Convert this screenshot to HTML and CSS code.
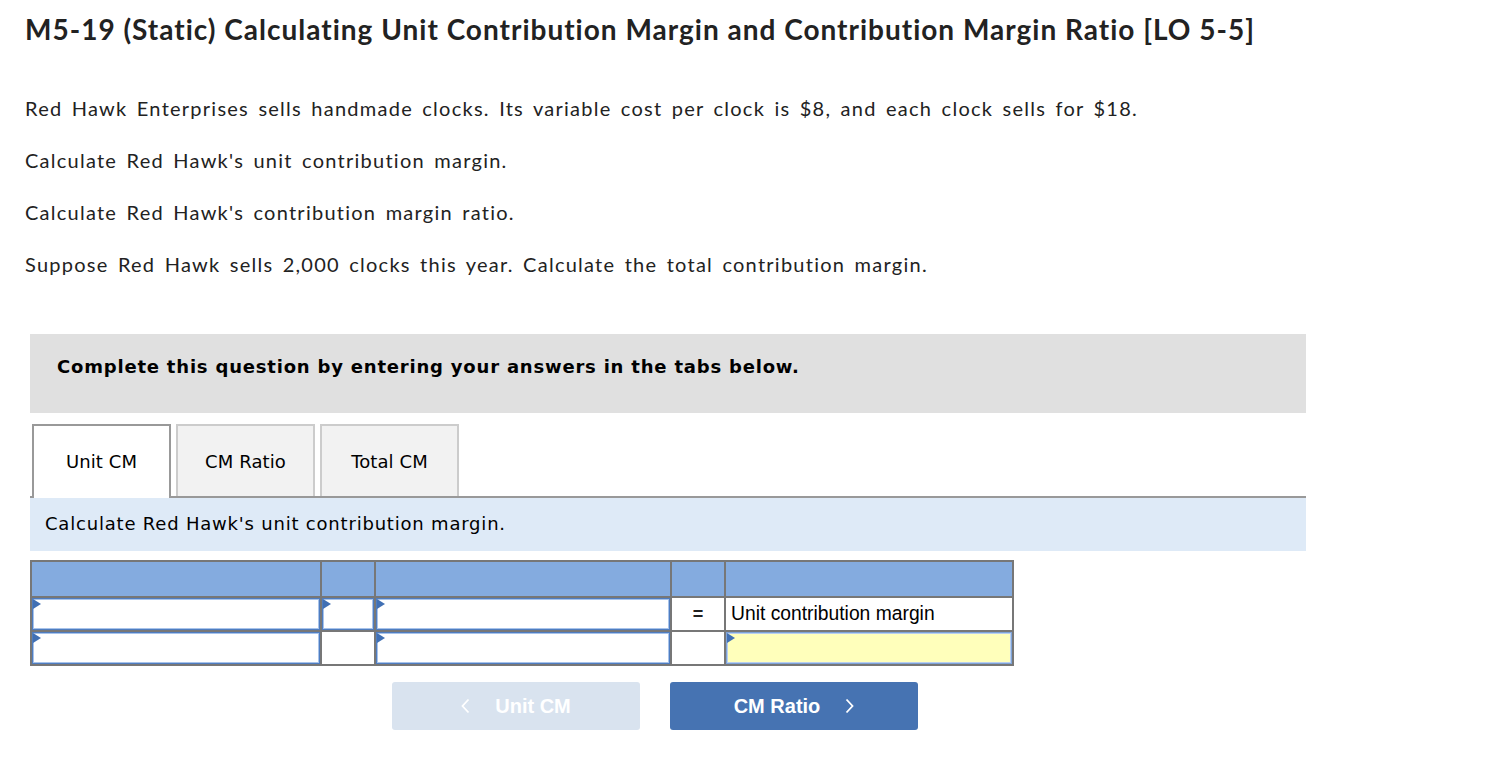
FILE: index.html
```html
<!DOCTYPE html>
<html lang="en">
<head>
<meta charset="utf-8">
<title>M5-19 (Static)</title>
<link rel="stylesheet" href="styles.css">
</head>
<body>
<div class="page">
  <h1 class="title">M5-19 (Static) Calculating Unit Contribution Margin and Contribution Margin Ratio [LO 5-5]</h1>
  <div class="question">
    <p>Red Hawk Enterprises sells handmade clocks. Its variable cost per clock is $8, and each clock sells for $18.</p>
    <p>Calculate Red Hawk's unit contribution margin.</p>
    <p>Calculate Red Hawk's contribution margin ratio.</p>
    <p>Suppose Red Hawk sells 2,000 clocks this year. Calculate the total contribution margin.</p>
  </div>
  <div class="answer">
    <div class="banner">Complete this question by entering your answers in the tabs below.</div>
    <div class="tabs">
      <div class="tab active">Unit CM</div>
      <div class="tab">CM Ratio</div>
      <div class="tab">Total CM</div>
    </div>
    <div class="instr">Calculate Red Hawk's unit contribution margin.</div>
    <div class="grid">
      <div class="cell head"></div>
      <div class="cell head"></div>
      <div class="cell head"></div>
      <div class="cell head"></div>
      <div class="cell head"></div>

      <div class="cell"><div class="inp"></div></div>
      <div class="cell"><div class="inp"></div></div>
      <div class="cell"><div class="inp"></div></div>
      <div class="cell eq">=</div>
      <div class="cell label">Unit contribution margin</div>

      <div class="cell"><div class="inp"></div></div>
      <div class="cell"></div>
      <div class="cell"><div class="inp"></div></div>
      <div class="cell"></div>
      <div class="cell"><div class="inp yellow"></div></div>
    </div>
    <div class="nav">
      <div class="btn prev">
        <svg class="chev" width="9" height="16" viewBox="0 0 9 16"><path d="M7.5 1.5 L1.5 8 L7.5 14.5" fill="none" stroke="#fff" stroke-width="1.8"/></svg>
        <span>Unit CM</span>
      </div>
      <div class="btn next">
        <span>CM Ratio</span>
        <svg class="chev" width="9" height="16" viewBox="0 0 9 16"><path d="M1.5 1.5 L7.5 8 L1.5 14.5" fill="none" stroke="#fff" stroke-width="1.8"/></svg>
      </div>
    </div>
  </div>
</div>
</body>
</html>
```
FILE: styles.css
```css
html, body {
  margin: 0;
  padding: 0;
  background: #fff;
}

.page {
  padding: 0 0 0 25px;
  color: #222;
}

.title {
  margin: 0;
  padding-top: 13px;
  font-family: Lato, "Open Sans", sans-serif;
  font-weight: 700;
  font-size: 28px;
  line-height: 32px;
  letter-spacing: 1px;
  color: #222;
}

.question {
  padding-top: 51px;
}

.question p {
  margin: 0 0 28px 0;
  font-family: Lato, "Open Sans", sans-serif;
  font-size: 20px;
  line-height: 24px;
  letter-spacing: 1.25px;
  word-spacing: 3px;
  color: #222;
}

.answer {
  margin-left: 5px;
  width: 1276px;
  padding-top: 30px;
}

.banner {
  background: #e0e0e0;
  height: 79px;
  box-sizing: border-box;
  padding: 22px 0 0 27px;
  font-family: "DejaVu Sans", Verdana, sans-serif;
  font-weight: 700;
  font-size: 18px;
  line-height: 22px;
  letter-spacing: 0.8px;
  color: #000;
}

.tabs {
  display: flex;
  gap: 5px;
  margin-top: 11px;
  padding-left: 2px;
  height: 72px;
  border-bottom: 2px solid #999;
}

.tab {
  width: 139px;
  box-sizing: border-box;
  height: 72px;
  border: 2px solid #ccc;
  border-bottom: none;
  background: #f2f2f2;
  display: flex;
  align-items: center;
  justify-content: center;
  font-family: "DejaVu Sans", Verdana, sans-serif;
  font-size: 18px;
  letter-spacing: 0.1px;
  color: #000;
}

.tab.active {
  height: 74px;
  border-color: #999;
  background: #fff;
  position: relative;
  z-index: 1;
  padding-bottom: 2px;
}

.instr {
  height: 53px;
  box-sizing: border-box;
  background: #deeaf7;
  padding: 15px 0 0 15px;
  font-family: "DejaVu Sans", Verdana, sans-serif;
  font-size: 18px;
  line-height: 22px;
  letter-spacing: 0.8px;
  color: #000;
}

.grid {
  margin-top: 9px;
  width: 984px;
  box-sizing: border-box;
  display: grid;
  grid-template-columns: 288px 52px 294px 52px 286px;
  grid-template-rows: 34px 32px 32px;
  gap: 2px;
  padding: 2px;
  background: #777;
}

.cell {
  background: #fff;
  position: relative;
  display: flex;
}

.cell.head {
  background: #84abdf;
}

.cell.eq {
  align-items: center;
  justify-content: center;
  font-family: "Liberation Sans", Arial, sans-serif;
  font-size: 18px;
  font-weight: 700;
  color: #222;
}

.cell.label {
  align-items: center;
  padding-left: 5px;
  font-family: "Liberation Sans", Arial, sans-serif;
  font-size: 19.3px;
  color: #000;
}

.inp {
  flex: 1;
  position: relative;
  background: #fff;
  border: 1px solid #4f7dc0;
  box-shadow: inset 0 0 0 1px #a8c3ea;
}

.inp.yellow {
  background: #ffffbb;
  border-color: #7ea3d8;
  box-shadow: inset 0 0 0 1px #b9cfee;
}

.inp::before {
  content: "";
  position: absolute;
  left: 0;
  top: 0;
  border-left: 8px solid #4170b4;
  border-top: 5px solid transparent;
  border-bottom: 5px solid transparent;
}

.nav {
  display: flex;
  gap: 30px;
  margin-top: 16px;
  padding-left: 362px;
}

.btn {
  width: 248px;
  height: 48px;
  border-radius: 3px;
  display: flex;
  align-items: center;
  justify-content: center;
  gap: 25px;
  font-family: "Liberation Sans", Arial, sans-serif;
  font-weight: 700;
  font-size: 20px;
  color: #fff;
}

.btn.prev {
  background: #d9e3ef;
}

.btn.next {
  background: #4673b2;
}

.chev {
  display: block;
}
```
